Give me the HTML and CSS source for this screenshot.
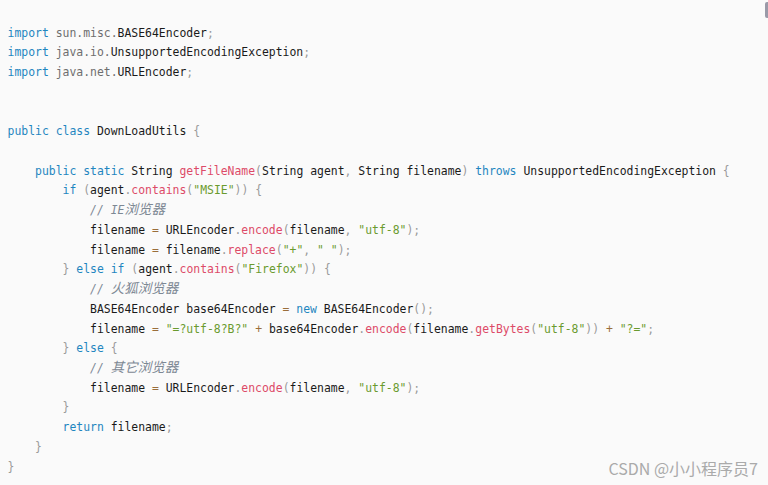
FILE: index.html
```html
<!DOCTYPE html>
<html>
<head>
<meta charset="utf-8">
<link rel="stylesheet" href="styles.css">
</head>
<body>
<div class="page">
<pre class="code"><span class="k">import</span> <span class="ns">sun.misc.</span>BASE64Encoder<span class="p">;</span>
<span class="k">import</span> <span class="ns">java.io.</span>UnsupportedEncodingException<span class="p">;</span>
<span class="k">import</span> <span class="ns">java.net.</span>URLEncoder<span class="p">;</span>


<span class="k">public</span> <span class="k">class</span> DownLoadUtils <span class="p">{</span>

    <span class="k">public</span> <span class="k">static</span> String <span class="f">getFileName</span><span class="p">(</span>String agent<span class="p">,</span> String filename<span class="p">)</span> <span class="k">throws</span> UnsupportedEncodingException <span class="p">{</span>
        <span class="k">if</span> <span class="p">(</span>agent<span class="p">.</span><span class="f">contains</span><span class="p">(</span><span class="s">"MSIE"</span><span class="p">))</span> <span class="p">{</span>
            <span class="c">// IE<span class="cjk">浏览器</span></span>
            filename <span class="o">=</span> URLEncoder<span class="p">.</span><span class="f">encode</span><span class="p">(</span>filename<span class="p">,</span> <span class="s">"utf-8"</span><span class="p">);</span>
            filename <span class="o">=</span> filename<span class="p">.</span><span class="f">replace</span><span class="p">(</span><span class="s">"+"</span><span class="p">,</span> <span class="s">" "</span><span class="p">);</span>
        <span class="p">}</span> <span class="k">else</span> <span class="k">if</span> <span class="p">(</span>agent<span class="p">.</span><span class="f">contains</span><span class="p">(</span><span class="s">"Firefox"</span><span class="p">))</span> <span class="p">{</span>
            <span class="c">// <span class="cjk">火狐浏览器</span></span>
            BASE64Encoder base64Encoder <span class="o">=</span> <span class="k">new</span> BASE64Encoder<span class="p">();</span>
            filename <span class="o">=</span> <span class="s">"=?utf-8?B?"</span> <span class="o">+</span> base64Encoder<span class="p">.</span><span class="f">encode</span><span class="p">(</span>filename<span class="p">.</span><span class="f">getBytes</span><span class="p">(</span><span class="s">"utf-8"</span><span class="p">))</span> <span class="o">+</span> <span class="s">"?="</span><span class="p">;</span>
        <span class="p">}</span> <span class="k">else</span> <span class="p">{</span>
            <span class="c">// <span class="cjk">其它浏览器</span></span>
            filename <span class="o">=</span> URLEncoder<span class="p">.</span><span class="f">encode</span><span class="p">(</span>filename<span class="p">,</span> <span class="s">"utf-8"</span><span class="p">);</span>
        <span class="p">}</span>
        <span class="k">return</span> filename<span class="p">;</span>
    <span class="p">}</span>
<span class="p">}</span></pre>
<div class="watermark">CSDN @小小程序员7</div>
<div class="edge"></div>
</div>
</body>
</html>
```

FILE: styles.css
```css
html, body {
  margin: 0;
  padding: 0;
  background: #fafafa;
}
.page {
  position: relative;
  width: 768px;
  height: 485px;
  overflow: hidden;
  background: #fafafa;
}
.code {
  margin: 0;
  padding: 23.5px 0 0 7.5px;
  font-family: "DejaVu Sans Mono", "Noto Sans CJK SC", monospace;
  font-size: 11.43px;
  line-height: 19.73px;
  color: #1a1a1a;
  white-space: pre;
}
.k { color: #1f86c0; }
.ns { color: #6e6e6e; }
.p { color: #9a9a9a; }
.f { color: #dd4a68; }
.s { color: #6a9a2e; }
.o { color: #9a6e3a; }
.c {
  color: #7d8894;
  font-style: italic;
}
.cjk {
  font-family: "Noto Sans CJK SC", sans-serif;
  font-size: 13.5px;
  line-height: 0;
}
.watermark {
  position: absolute;
  right: 10px;
  top: 458px;
  font-family: "Noto Sans CJK SC", "Noto Sans", sans-serif;
  font-size: 16px;
  line-height: 20px;
  color: #aaaaaa;
}
.edge {
  position: absolute;
  right: 0;
  top: 2px;
  width: 3px;
  height: 16px;
  background: #9a9aa8;
  border-radius: 2px 0 0 2px;
}
```
